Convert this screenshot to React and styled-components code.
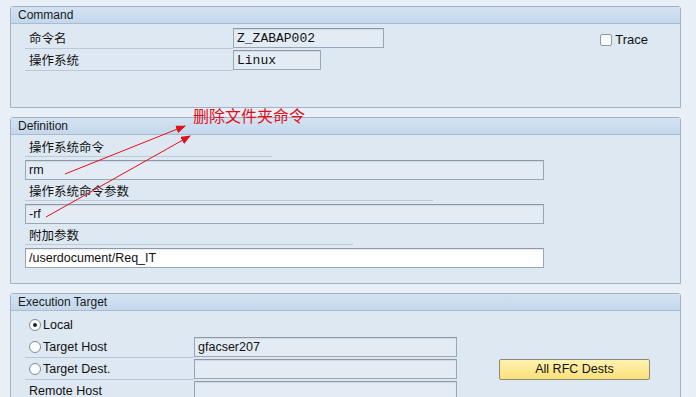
import React from "react";
import styled, { createGlobalStyle } from "styled-components";

const GlobalStyle = createGlobalStyle`
  body {
    margin: 0;
    background: #e8eff7;
    font-family: "Liberation Sans", "Noto Sans CJK SC", sans-serif;
    font-size: 12px;
    color: #111;
  }
`;

const App = () => {
  return (
    <>
      <GlobalStyle />
      <Page>
        <Panel>
          <PanelHeader>Command</PanelHeader>
          <CommandBody>
            <Row>
              <RowLabel width={208}>命令名</RowLabel>
              <Field width={151} mono>
                Z_ZABAP002
              </Field>
              <Trace>
                <CheckBox />
                Trace
              </Trace>
            </Row>
            <Row>
              <RowLabel width={208}>操作系统</RowLabel>
              <Field width={88} mono>
                Linux
              </Field>
            </Row>
          </CommandBody>
        </Panel>

        <Panel>
          <PanelHeader>Definition</PanelHeader>
          <DefinitionBody>
            <StackLabel width={247}>操作系统命令</StackLabel>
            <Field width={519}>rm</Field>
            <StackLabel width={408}>操作系统命令参数</StackLabel>
            <Field width={519}>-rf</Field>
            <StackLabel width={328}>附加参数</StackLabel>
            <Field width={519} editable>
              /userdocument/Req_IT
            </Field>
          </DefinitionBody>
        </Panel>

        <Panel>
          <PanelHeader>Execution Target</PanelHeader>
          <TargetBody>
            <Row>
              <RadioLabel>
                <Radio checked />
                Local
              </RadioLabel>
            </Row>
            <Row>
              <RowLabel width={169}>
                <Radio />
                Target Host
              </RowLabel>
              <Field width={263}>gfacser207</Field>
            </Row>
            <Row>
              <RowLabel width={169}>
                <Radio />
                Target Dest.
              </RowLabel>
              <Field width={263} />
              <RfcButton>All RFC Dests</RfcButton>
            </Row>
            <Row>
              <RowLabel width={169}>Remote Host</RowLabel>
              <Field width={263} />
            </Row>
          </TargetBody>
        </Panel>

        <Note>删除文件夹命令</Note>
        <Arrows width="696" height="397" viewBox="0 0 696 397">
          <defs>
            <marker
              id="head"
              markerWidth="10"
              markerHeight="8"
              refX="9"
              refY="4"
              orient="auto"
              markerUnits="userSpaceOnUse"
            >
              <path d="M0,0 L10,4 L0,8 z" fill="#e0101a" />
            </marker>
          </defs>
          <line x1="65" y1="174" x2="185" y2="126" stroke="#e0101a" strokeWidth="1" markerEnd="url(#head)" />
          <line x1="46" y1="217" x2="190" y2="136" stroke="#e0101a" strokeWidth="1" markerEnd="url(#head)" />
        </Arrows>
      </Page>
    </>
  );
};

const Page = styled.div`
  position: relative;
  width: 696px;
  height: 397px;
  overflow: hidden;
  box-sizing: border-box;
  padding: 6px 0 0 10px;
  display: flex;
  flex-direction: column;
  gap: 9px;
`;

const Panel = styled.section`
  width: 671px;
  box-sizing: border-box;
  border: 1px solid #a2b2c3;
  border-radius: 3px 3px 0 0;
  background: #dee8f3;
  flex-shrink: 0;
`;

const PanelHeader = styled.div`
  height: 16px;
  line-height: 16px;
  padding-left: 7px;
  background: linear-gradient(#d4e3f2, #c3d7ec);
  border-bottom: 1px solid #a9bbcd;
  font-size: 12px;
  color: #1a1a1a;
`;

const CommandBody = styled.div`
  height: 83px;
  box-sizing: border-box;
  padding: 3px 32px 0 14px;
`;

const DefinitionBody = styled.div`
  height: 148px;
  box-sizing: border-box;
  padding: 1px 0 0 14px;
  display: flex;
  flex-direction: column;
  align-items: flex-start;
`;

const TargetBody = styled.div`
  height: 120px;
  box-sizing: border-box;
  padding: 3px 0 0 14px;
`;

const Row = styled.div`
  display: flex;
  align-items: center;
  height: 22px;
`;

const RowLabel = styled.div`
  width: ${({ width }) => width}px;
  height: 22px;
  box-sizing: border-box;
  display: flex;
  align-items: center;
  padding-left: 4px;
  border-bottom: 1px solid #b9c7d6;
  font-size: 12.5px;
  flex-shrink: 0;
`;

const RadioLabel = styled.div`
  display: flex;
  align-items: center;
  padding-left: 4px;
  height: 22px;
  font-size: 12.5px;
`;

const StackLabel = styled.div`
  width: ${({ width }) => width}px;
  height: 21px;
  box-sizing: border-box;
  padding: 0 0 0 4px;
  margin-bottom: 3px;
  display: flex;
  align-items: center;
  border-bottom: 1px solid #bccad8;
  font-size: 12.5px;
`;

const Field = styled.div`
  width: ${({ width }) => width}px;
  height: 20px;
  box-sizing: border-box;
  border: 1px solid #98a7b6;
  border-top-color: #8a98a8;
  box-shadow: inset 0 1px 1px rgba(0, 0, 0, 0.08);
  background: ${({ editable }) => (editable ? "#ffffff" : "#e3ebf4")};
  padding-left: 3px;
  display: flex;
  align-items: center;
  font-family: ${({ mono }) =>
    mono ? '"Liberation Mono", monospace' : '"Liberation Sans", sans-serif'};
  font-size: ${({ mono }) => (mono ? "13px" : "12.5px")};
  color: #111;
  flex-shrink: 0;
`;

const Trace = styled.label`
  margin-left: auto;
  display: flex;
  align-items: center;
  font-size: 13px;
  margin-top: 3px;
`;

const CheckBox = styled.span`
  width: 12px;
  height: 12px;
  box-sizing: border-box;
  border: 1px solid #8e9aa6;
  border-radius: 2px;
  background: linear-gradient(#f4f6f8, #ffffff);
  margin-right: 3px;
`;

const Radio = styled.span`
  position: relative;
  width: 12px;
  height: 12px;
  box-sizing: border-box;
  border: 1px solid #7f8b97;
  border-radius: 50%;
  background: #fbfcfd;
  margin-right: 2px;
  flex-shrink: 0;

  &::after {
    content: "";
    display: ${({ checked }) => (checked ? "block" : "none")};
    position: absolute;
    left: 3px;
    top: 3px;
    width: 4px;
    height: 4px;
    border-radius: 50%;
    background: #222;
  }
`;

const RfcButton = styled.button`
  margin-left: 42px;
  width: 151px;
  height: 21px;
  border: 1px solid #8a8a7a;
  border-radius: 2px;
  background: linear-gradient(#fff3b0, #fbe07a);
  font-family: "Liberation Sans", sans-serif;
  font-size: 12.5px;
  color: #111;
  padding: 0;
`;

const Note = styled.div`
  position: absolute;
  left: 193px;
  top: 106px;
  font-family: "Noto Sans CJK SC", sans-serif;
  font-size: 16px;
  line-height: 18px;
  color: #e0101a;
`;

const Arrows = styled.svg`
  position: absolute;
  left: 0;
  top: 0;
  pointer-events: none;
`;

export default App;
